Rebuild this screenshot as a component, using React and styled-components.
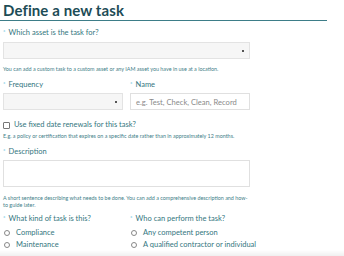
import React from 'react';
import styled, { createGlobalStyle } from 'styled-components';

const Global = createGlobalStyle`
body{margin:0;background:#fff;font-family:"Lato","Open Sans",sans-serif;}
`;

const Page = styled.div`
padding:0 3px;
width:344px;
height:256px;
box-sizing:border-box;
overflow:hidden;
`;

const Header = styled.div`
width:324px;
margin-left:-3px;
padding:2px 0 2px 3px;
border-bottom:1px solid #3d7d88;
`;

const Title = styled.h1`
margin:0;
font-size:15px;
line-height:16px;
font-weight:700;
color:#1d4c56;
letter-spacing:0.1px;
`;

const Form = styled.div`
width:247px;
display:flex;
flex-direction:column;
`;

const Label = styled.div`
font-size:7.5px;
line-height:10px;
color:#347680;
margin-top:${p => p.mt || 0}px;
&::before{
  content:"*";
  color:#4cb8d6;
  margin-right:3px;
  font-size:6px;
  vertical-align:1px;
}
`;

const Help = styled.div`
font-size:5.4px;
line-height:7px;
color:#3f8089;
margin-top:${p => p.mt || 0}px;
`;

const Select = styled.div`
box-sizing:border-box;
height:17px;
margin-top:${p => p.mt || 0}px;
background:#f6f6f6;
border:1px solid #e3e3e3;
display:flex;
align-items:center;
justify-content:flex-end;
padding-right:5px;
&::after{
  content:"";
  width:2px;
  height:2px;
  background:#555;
}
`;

const Input = styled.div`
box-sizing:border-box;
height:17px;
margin-top:${p => p.mt || 0}px;
background:#fff;
border:1px solid #e0e0e0;
font-size:7.6px;
color:#8a8a8a;
display:flex;
align-items:center;
padding-left:5px;
white-space:nowrap;
`;

const TextArea = styled.div`
box-sizing:border-box;
height:27px;
margin-top:3px;
border:1px solid #e0e0e0;
background:#fff;
`;

const Cols = styled.div`
display:grid;
grid-template-columns:120px 120px;
column-gap:7px;
margin-top:${p => p.mt || 0}px;
`;

const Col = styled.div`
display:flex;
flex-direction:column;
`;

const Check = styled.label`
display:flex;
align-items:center;
gap:4px;
font-size:7.5px;
line-height:10px;
color:#347680;
margin-top:10px;
`;

const Box = styled.span`
flex-shrink:0;
width:5px;
height:5px;
border:1px solid #777;
border-radius:1px;
`;

const Radio = styled.div`
display:flex;
align-items:center;
gap:6px;
font-size:7.5px;
line-height:10px;
color:#347680;
margin-top:${p => p.mt || 2}px;
padding-left:1px;
white-space:nowrap;
&::before{
  content:"";
  flex-shrink:0;
  width:4px;
  height:4px;
  border:1px solid #888;
  border-radius:50%;
}
`;

const Fade = styled.div`
position:fixed;
left:0;
right:0;
bottom:0;
height:6px;
background:linear-gradient(to bottom, rgba(0,0,0,0), rgba(0,0,0,0.06));
`;

const App = () => {
  return (
    <Page>
      <Global />
      <Header><Title>Define a new task</Title></Header>
      <Form>
        <Label mt={6}>Which asset is the task for?</Label>
        <Select mt={4} />
        <Help mt={7}>You can add a custom task to a custom asset or any IAM asset you have in use at a location.</Help>
        <Cols mt={6}>
          <Col>
            <Label>Frequency</Label>
            <Select mt={3} />
          </Col>
          <Col>
            <Label>Name</Label>
            <Input mt={3}>e.g. Test, Check, Clean, Record</Input>
          </Col>
        </Cols>
        <Check><Box />Use fixed date renewals for this task?</Check>
        <Help mt={3}>E.g. a policy or certification that expires on a specific date rather than in approximately 12 months.</Help>
        <Label mt={6}>Description</Label>
        <TextArea />
        <Help mt={8}>A short sentence describing what needs to be done. You can add a comprehensive description and how-to guide later.</Help>
        <Cols mt={4}>
          <Col>
            <Label>What kind of task is this?</Label>
            <Radio mt={4}>Compliance</Radio>
            <Radio>Maintenance</Radio>
          </Col>
          <Col>
            <Label>Who can perform the task?</Label>
            <Radio mt={4}>Any competent person</Radio>
            <Radio>A qualified contractor or individual</Radio>
          </Col>
        </Cols>
      </Form>
      <Fade />
    </Page>
  );
};

export default App;
